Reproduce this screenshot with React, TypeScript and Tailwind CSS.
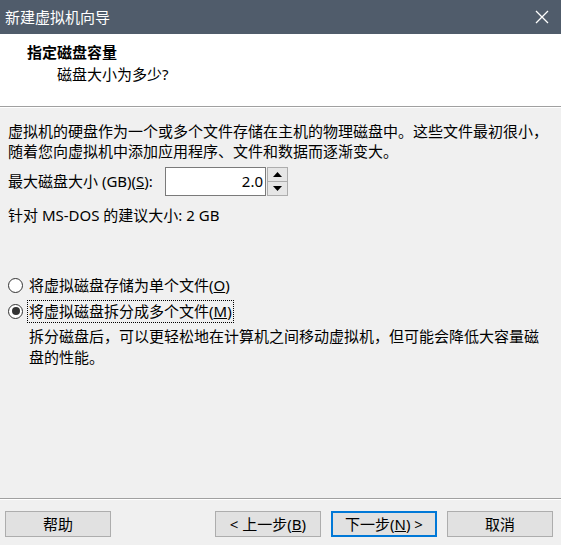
import React from 'react';

const font = { fontFamily: '"Noto Sans", "Noto Sans CJK SC", sans-serif' };

function Btn({ children, primary }: { children: React.ReactNode; primary?: boolean }) {
  return (
    <button
      className={`w-[106px] h-[26px] bg-[#e1e1e1] text-[15px] text-black flex items-center justify-center leading-none ${
        primary ? 'border-2 border-[#0078d7]' : 'border border-[#adadad]'
      }`}
    >
      {children}
    </button>
  );
}

function Radio({ checked }: { checked?: boolean }) {
  return (
    <span className="w-[15px] h-[15px] rounded-full border border-[#333] bg-white flex items-center justify-center shrink-0">
      {checked && <span className="w-[8px] h-[8px] rounded-full bg-[#333]" />}
    </span>
  );
}

export default function App() {
  return (
    <div className="w-[561px] h-[545px] bg-[#f0f0f0] flex flex-col overflow-hidden text-black" style={font}>
      {/* title bar */}
      <div className="h-[34px] bg-[#505c6b] flex items-center justify-between pl-[5px] pr-[12px] shrink-0">
        <span className="text-white text-[15px] leading-none">新建虚拟机向导</span>
        <svg width="14" height="14" viewBox="0 0 14 14">
          <path d="M1 1L13 13M13 1L1 13" stroke="#fff" strokeWidth="1.3" />
        </svg>
      </div>

      {/* header */}
      <div className="h-[72px] bg-white shrink-0 pt-[8px]">
        <div className="pl-[27px] text-[15px] font-bold leading-[20px]">指定磁盘容量</div>
        <div className="pl-[57px] text-[15px] leading-[22px] mt-[1px]">磁盘大小为多少?</div>
      </div>
      <div className="h-px bg-[#a0a0a0] shrink-0" />
      <div className="h-px bg-white shrink-0" />

      {/* body */}
      <div className="flex-1 pl-[8px] pr-[6px] pt-[13px] text-[15px]">
        <p className="leading-[20px]">
          虚拟机的硬盘作为一个或多个文件存储在主机的物理磁盘中。这些文件最初很小，随着您向虚拟机中添加应用程序、文件和数据而逐渐变大。
        </p>

        <div className="flex items-center mt-[6px] h-[29px]">
          <span className="w-[157px] leading-none">
            最大磁盘大小 (GB)(<span className="underline">S</span>):
          </span>
          <div className="w-[101px] h-[29px] border border-[#7a7a7a] bg-white flex items-center justify-end pr-[2px] leading-none">
            2.0
          </div>
          <div className="flex flex-col ml-[1px] h-[29px] w-[21px] border border-[#adadad] bg-[#f0f0f0]">
            <div className="flex-1 flex items-center justify-center bg-[#e6e6e6] border-b border-[#adadad]">
              <svg width="9" height="5" viewBox="0 0 9 5"><path d="M4.5 0L9 5H0Z" fill="#000" /></svg>
            </div>
            <div className="flex-1 flex items-center justify-center bg-[#e6e6e6]">
              <svg width="9" height="5" viewBox="0 0 9 5"><path d="M0 0H9L4.5 5Z" fill="#000" /></svg>
            </div>
          </div>
        </div>

        <p className="mt-[9px] leading-[20px]">针对 MS-DOS 的建议大小: 2 GB</p>

        <div className="mt-[48px] flex flex-col gap-[2px]">
          <div className="flex items-center h-[24px] gap-[6px]">
            <Radio />
            <span className="leading-none">
              将虚拟磁盘存储为单个文件(<span className="underline">O</span>)
            </span>
          </div>
          <div className="flex items-center h-[24px] gap-[4px]">
            <Radio checked />
            <span className="leading-none border border-dotted border-black px-[1px] py-[3px]">
              将虚拟磁盘拆分成多个文件(<span className="underline">M</span>)
            </span>
          </div>
        </div>
        <p className="ml-[21px] w-[514px] leading-[21px] mt-[3px]">
          拆分磁盘后，可以更轻松地在计算机之间移动虚拟机，但可能会降低大容量磁盘的性能。
        </p>
      </div>

      <div className="h-px bg-[#a0a0a0] shrink-0" />
      <div className="h-px bg-white shrink-0" />

      {/* footer */}
      <div className="h-[45px] shrink-0 flex items-start pt-[11px] pl-[5px] pr-[8px]">
        <Btn>帮助</Btn>
        <div className="flex-1" />
        <div className="flex gap-[10px]">
          <Btn>
            &lt; 上一步(<span className="underline">B</span>)
          </Btn>
          <Btn primary>
            下一步(<span className="underline">N</span>) &gt;
          </Btn>
          <Btn>取消</Btn>
        </div>
      </div>
    </div>
  );
}
